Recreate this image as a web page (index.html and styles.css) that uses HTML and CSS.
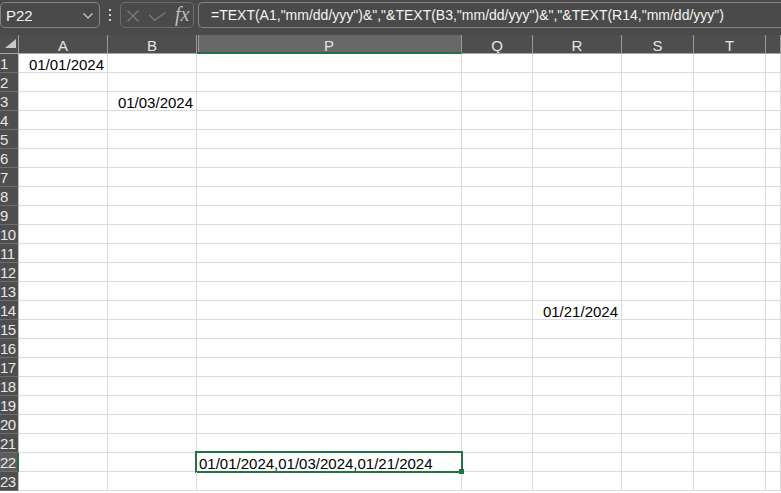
FILE: index.html
```html
<!DOCTYPE html>
<html>
<head>
<meta charset="utf-8">
<link rel="stylesheet" href="styles.css">
</head>
<body>
<div class="app">
  <div class="toolbar">
    <div class="namebox">
      <span class="name">P22</span>
      <svg class="chev" width="10" height="6" viewBox="0 0 10 6"><path d="M0.5 0.5 L5 5 L9.5 0.5" fill="none" stroke="#cfcfcf" stroke-width="1.2"/></svg>
    </div>
    <div class="vdots"><i></i><i></i><i></i></div>
    <div class="fxbox">
      <svg class="ico-x" width="12" height="12" viewBox="0 0 12 12"><path d="M0.5 0.5 L11.5 11.5 M11.5 0.5 L0.5 11.5" stroke="#7c7c7c" stroke-width="1.2" fill="none"/></svg>
      <svg class="ico-check" width="17" height="9" viewBox="0 0 17 9"><path d="M0.5 3 L5.5 8.3 L16.5 0.5" stroke="#7c7c7c" stroke-width="1.2" fill="none"/></svg>
      <span class="fx">fx</span>
    </div>
    <div class="formula">=TEXT(A1,"mm/dd/yyy")&amp;","&amp;TEXT(B3,"mm/dd/yyy")&amp;","&amp;TEXT(R14,"mm/dd/yyy")</div>
  </div>
  <div class="sheet" id="sheet"></div>
</div>
<script src="app.js"></script>
</body>
</html>
```
FILE: app.js
```js
(function(){
  var sheet = document.getElementById('sheet');
  var cols = ['A','B','P','Q','R','S','T',''];
  var data = {
    'A1': {t:'01/01/2024', c:'num'},
    'B3': {t:'01/03/2024', c:'num'},
    'R14': {t:'01/21/2024', c:'num'},
    'P22': {t:'01/01/2024,01/03/2024,01/21/2024', c:'txt'}
  };
  function el(cls, txt){
    var d = document.createElement('div');
    d.className = cls;
    if (txt !== undefined) d.textContent = txt;
    sheet.appendChild(d);
    return d;
  }
  var corner = el('hdr corner');
  corner.innerHTML = '<span class="tri"></span>';
  cols.forEach(function(c){
    el('hdr colhdr' + (c === 'P' ? ' sel' : ''), c);
  });
  for (var r = 1; r <= 23; r++) {
    el('hdr rowhdr' + (r === 22 ? ' sel' : ''), String(r));
    cols.forEach(function(c){
      var key = c + r;
      var d = data[key];
      var cell = el('cell' + (d ? ' ' + d.c : '') + (key === 'P22' ? ' active' : ''), d ? d.t : '');
      if (key === 'P22') {
        var h = document.createElement('span');
        h.className = 'handle';
        cell.appendChild(h);
      }
    });
  }
})();
```
FILE: styles.css
```css
html, body {
  margin: 0;
  padding: 0;
  background: #ffffff;
  overflow: hidden;
}
.app {
  width: 781px;
  height: 493px;
  overflow: hidden;
  font-family: "Liberation Sans", Arial, sans-serif;
}
.toolbar {
  height: 35px;
  background: #4a4a4a;
  display: flex;
  align-items: flex-start;
  padding-top: 2px;
  box-sizing: border-box;
}
.namebox {
  width: 100px;
  height: 26px;
  box-sizing: border-box;
  border: 1px solid #858585;
  border-radius: 5px;
  display: flex;
  align-items: center;
  justify-content: space-between;
  padding: 0 6px 0 5px;
  color: #f2f2f2;
  font-size: 15px;
}
.chev { margin-top: 1px; }
.vdots {
  width: 20px;
  height: 26px;
  display: flex;
  flex-direction: column;
  align-items: center;
  justify-content: center;
  gap: 3px;
}
.vdots i {
  display: block;
  width: 2px;
  height: 2px;
  background: #d0d0d0;
}
.fxbox {
  width: 74px;
  height: 26px;
  box-sizing: border-box;
  border: 1px solid #6c6c6c;
  border-radius: 5px;
  display: flex;
  align-items: center;
  padding-left: 6px;
}
.ico-x { margin-top: 1px; }
.ico-check { margin-left: 10px; margin-top: 3px; }
.fx {
  margin-left: 9px;
  font-family: "Liberation Serif", "DejaVu Serif", serif;
  font-style: italic;
  font-size: 20px;
  color: #bdbdbd;
  line-height: 20px;
  margin-top: -2px;
}
.formula {
  margin-left: 4px;
  flex: 1;
  height: 26px;
  box-sizing: border-box;
  border: 1px solid #858585;
  border-right: none;
  border-radius: 5px 0 0 5px;
  margin-right: -20px;
  color: #f4f4f4;
  font-size: 14px;
  line-height: 24px;
  padding-left: 12px;
  white-space: nowrap;
}
.sheet {
  display: grid;
  grid-template-columns: 19px 89px 89px 265px 71px 89px 72px 72px 1fr;
  grid-auto-rows: 19px;
}
.hdr {
  background: #4e4e4e;
  color: #e6e6e6;
  box-sizing: border-box;
  overflow: hidden;
  white-space: nowrap;
}
.corner {
  position: relative;
  border-right: 1px solid #9c9c9c;
  border-bottom: 1px solid #a8a8a8;
}
.tri {
  position: absolute;
  right: 2px;
  bottom: 5px;
  width: 0;
  height: 0;
  border-left: 11px solid transparent;
  border-bottom: 9px solid #c8c8c8;
}
.colhdr {
  border-right: 1px solid #9a9a9a;
  border-bottom: 1px solid #a8a8a8;
  text-align: center;
  font-size: 15px;
  line-height: 19px;
  padding-top: 1px;
}
.colhdr.sel {
  background: #686868;
  border-bottom: 2px solid #217346;
  box-shadow: inset 1px 0 0 #4e4e4e, inset 2px 0 0 #9a9a9a;
}
.rowhdr {
  border-right: 1px solid #c4c4c4;
  border-bottom: 1px solid #6e6e6e;
  font-size: 15px;
  line-height: 19px;
  padding-left: 0;
  letter-spacing: -0.5px;
}
.rowhdr.sel {
  background: #5c5c5c;
  border-right: 2px solid #217346;
}
.cell {
  border-right: 1px solid #dadada;
  border-bottom: 1px solid #dadada;
  box-sizing: border-box;
  font-size: 15px;
  line-height: 18px;
  color: #000;
  white-space: nowrap;
  padding: 2px 3px 0 2px;
  position: relative;
}
.cell.num {
  text-align: right;
  padding-right: 3px;
}
.cell.txt {
  padding-left: 2px;
}
.cell.active::after {
  content: "";
  position: absolute;
  left: -2px;
  top: -2px;
  right: -2px;
  bottom: -2px;
  border: 2px solid #217346;
  pointer-events: none;
}
.handle {
  position: absolute;
  right: -3px;
  bottom: -3px;
  width: 5px;
  height: 5px;
  background: #217346;
  z-index: 2;
}
```
